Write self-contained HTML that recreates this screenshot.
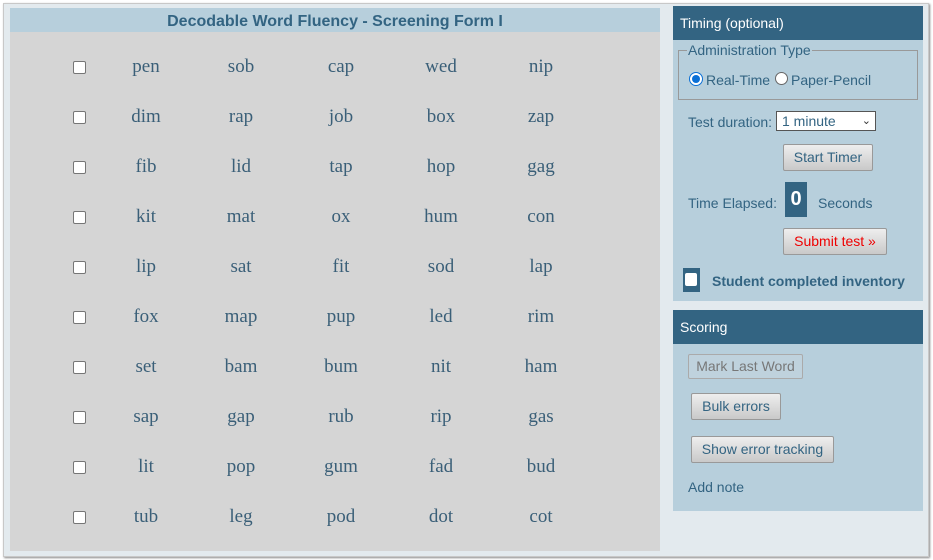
<!DOCTYPE html>
<html><head><style>
*{box-sizing:border-box;margin:0;padding:0}
body{width:933px;height:560px;background:#fff;font-family:"Liberation Sans",sans-serif;position:relative;overflow:hidden}
.frame{position:absolute;left:3px;top:3px;width:926px;height:554px;background:#e3eaee;border:1px solid #c8c8c8;box-shadow:1px 1px 2px #888}
.left{position:absolute;left:10px;top:8px;width:650px;height:543px;background:#d5d5d5}
.hdr{height:24px;background:#b7cfdc;color:#336482;font-weight:bold;font-size:16px;text-align:center;line-height:28px}
.w{position:absolute;font-family:"Liberation Serif",serif;font-size:19px;color:#3a5f78;transform:translateX(-50%)}
.cb{position:absolute;width:13px;height:13px;border:1px solid #767676;border-radius:2px;background:#fff}
.panel{position:absolute;left:673px;width:250px;background:#b7cfdc;color:#336482;font-size:14px}
.ph{background:#336482;color:#fff;height:34px;line-height:34px;padding-left:7px;font-size:14px}
.btn{position:absolute;background:linear-gradient(#eee,#c9c9c9);border:1px solid #999;border-radius:2px;color:#336482;font-size:14px;text-align:center}
.abs{position:absolute}
</style></head><body>
<div class="frame"></div>
<div class="left"><div class="hdr">Decodable Word Fluency - Screening Form I</div></div>
<div id="g"></div>
<div class="panel" style="top:6px;height:295px">
<div class="ph">Timing (optional)</div>
<div class="abs" style="left:5px;top:44px;width:240px;height:50px;border:1px solid #999"></div>
<div class="abs" style="left:14px;top:36px;background:#b7cfdc;padding:0 1px">Administration Type</div>
<div class="abs" style="left:16px;top:66px;width:14px;height:14px;border-radius:50%;border:1px solid #0b70d6;background:#fff"><div style="margin:2px;width:8px;height:8px;border-radius:50%;background:#0b70d6"></div></div>
<div class="abs" style="left:33px;top:66px">Real-Time</div>
<div class="abs" style="left:102px;top:66px;width:13px;height:13px;border-radius:50%;border:1px solid #666;background:#fff"></div>
<div class="abs" style="left:118px;top:66px">Paper-Pencil</div>
<div class="abs" style="left:15px;top:108px">Test duration:</div>
<div class="abs" style="left:103px;top:105px;width:100px;height:20px;border:1px solid #555;background:#fff;padding-left:5px;line-height:18px">1 minute<span style="position:absolute;right:4px;top:0;font-size:11px;color:#333">&#8964;</span></div>
<div class="btn" style="left:110px;top:138px;width:90px;height:27px;line-height:25px">Start Timer</div>
<div class="abs" style="left:15px;top:189px">Time Elapsed:</div>
<div class="abs" style="left:112px;top:176px;width:22px;height:35px;background:#336482;color:#fff;font-weight:bold;font-size:20px;text-align:center;line-height:35px">0</div>
<div class="abs" style="left:145px;top:189px">Seconds</div>
<div class="btn" style="left:110px;top:222px;width:104px;height:27px;line-height:25px;color:#e00">Submit test »</div>
<div class="abs" style="left:10px;top:262px;width:17px;height:24px;background:#336482"><div style="margin:5px 2px;width:12px;height:13px;background:#fff;border-radius:2px"></div></div>
<div class="abs" style="left:39px;top:267px;font-weight:bold">Student completed inventory</div>
</div>
<div class="panel" style="top:310px;height:201px">
<div class="ph">Scoring</div>
<div class="abs" style="left:15px;top:44px;width:115px;height:25px;border:1px solid #aaa;border-radius:2px;background:#bfd2dd;color:#777;text-align:center;line-height:23px">Mark Last Word</div>
<div class="btn" style="left:18px;top:83px;width:90px;height:27px;line-height:25px">Bulk errors</div>
<div class="btn" style="left:18px;top:126px;width:143px;height:27px;line-height:25px">Show error tracking</div>
<div class="abs" style="left:15px;top:169px">Add note</div>
</div>
<script>
var w=["pen sob cap wed nip","dim rap job box zap","fib lid tap hop gag","kit mat ox hum con","lip sat fit sod lap","fox map pup led rim","set bam bum nit ham","sap gap rub rip gas","lit pop gum fad bud","tub leg pod dot cot"];
var xs=[146,241,341,441,541],h="";
w.forEach(function(r,i){var y=56+50*i;h+='<div class="cb" style="left:73px;top:'+(y+5)+'px"></div>';r.split(" ").forEach(function(t,j){h+='<div class="w" style="left:'+xs[j]+'px;top:'+y+'px">'+t+'</div>';});});
document.getElementById("g").innerHTML=h;
</script>
</body></html>
